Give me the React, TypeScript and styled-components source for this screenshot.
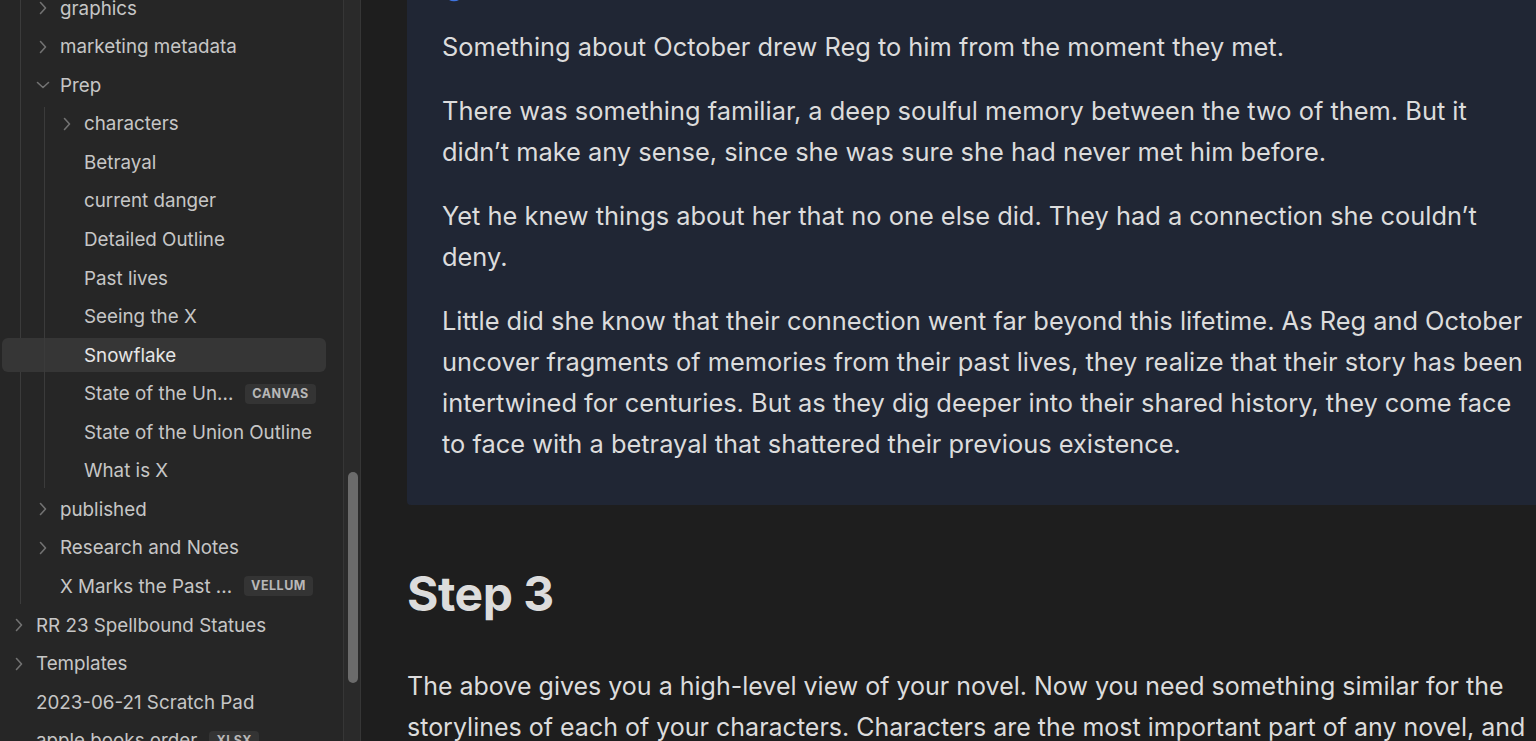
import React from 'react';
import styled, { createGlobalStyle } from 'styled-components';

const GlobalStyle = createGlobalStyle`
  html, body { margin: 0; padding: 0; background: #1e1e1e; overflow: hidden; }
  * { box-sizing: border-box; }
`;

const Shell = styled.div`
  display: flex;
  width: 1536px;
  height: 741px;
  overflow: hidden;
  font-family: Inter, "Noto Sans", sans-serif;
`;

const Sidebar = styled.aside`
  flex: none;
  width: 361px;
  display: flex;
  background: #262626;
  border-right: 1px solid #363636;
  overflow: hidden;
`;

const ListArea = styled.div`
  flex: 1;
  min-width: 0;
  padding: 0 17px 0 2px;
  margin-top: -9px;
`;

const ScrollTrack = styled.div`
  flex: none;
  width: 17px;
  background: #2a2a2a;
  border-left: 1px solid #363636;
  padding-left: 4px;
`;

const Thumb = styled.div<{ $top: number; $height: number }>`
  width: 10px;
  margin-top: ${(p) => p.$top}px;
  height: ${(p) => p.$height}px;
  border-radius: 5px;
  background: #6b6b6b;
`;

const Group = styled.div<{ $parentDepth: number }>`
  position: relative;
  &::before {
    content: '';
    position: absolute;
    left: ${(p) => 18 + p.$parentDepth * 24}px;
    top: 0;
    bottom: 0;
    width: 1px;
    background: #3b3b3b;
  }
`;

const Row = styled.div<{ $depth: number; $active?: boolean }>`
  display: flex;
  align-items: center;
  height: 34.5px;
  margin-bottom: 4.06px;
  padding-left: ${(p) => 8 + p.$depth * 24}px;
  padding-right: 12px;
  border-radius: 6px;
  background: ${(p) => (p.$active ? '#363636' : 'transparent')};
  color: ${(p) => (p.$active ? '#e6e6e6' : '#c6c6c6')};
  font-size: 18.8px;
  white-space: nowrap;
`;

const Chevron = styled.span`
  flex: none;
  width: 18px;
  margin-right: 8px;
  display: flex;
  align-items: center;
  justify-content: center;
  color: #727272;
`;

const Label = styled.span`
  flex: none;
`;

const Badge = styled.span`
  flex: none;
  margin-left: 12px;
  padding: 0 7px;
  height: 20px;
  line-height: 20px;
  border-radius: 4px;
  background: #343434;
  color: #b8b8b8;
  font-size: 12.5px;
  font-weight: 700;
  letter-spacing: 0.04em;
`;

const Main = styled.main`
  flex: 1;
  min-width: 0;
  background: #1e1e1e;
  overflow: hidden;
`;

const Content = styled.div`
  width: 1200px;
  margin-top: -42px;
  padding-left: 46px;
  color: #dcdcdc;
`;

const Callout = styled.div`
  background: #202634;
  border-radius: 4px;
  padding: 12px 35px 41px 35px;
`;

const CalloutTitle = styled.div`
  height: 41px;
  display: flex;
  align-items: center;
  margin-bottom: 15px;
  color: #3f74e0;
  padding-left: 1px;
`;

const Para = styled.p<{ $last?: boolean; $size: number }>`
  margin: 0 0 ${(p) => (p.$last ? 0 : 23)}px 0;
  font-size: ${(p) => p.$size}px;
  line-height: 41px;
  white-space: nowrap;
`;

const Heading = styled.h2`
  margin: 60px 0 43px 0;
  font-size: 48px;
  line-height: 1.2;
  font-weight: 700;
  letter-spacing: -0.01em;
  color: #dcdcdc;
`;

const ChevronRight = () => (
  <svg width="16" height="16" viewBox="0 0 16 16" fill="none">
    <path d="M5.5 2.5 L10.5 8 L5.5 13.5" stroke="currentColor" strokeWidth="1.6" strokeLinecap="round" strokeLinejoin="round" />
  </svg>
);

const ChevronDown = () => (
  <svg width="16" height="16" viewBox="0 0 16 16" fill="none">
    <path d="M2.5 5.5 L8 10.5 L13.5 5.5" stroke="currentColor" strokeWidth="1.6" strokeLinecap="round" strokeLinejoin="round" />
  </svg>
);

type Item = {
  name: string;
  folder?: boolean;
  open?: boolean;
  active?: boolean;
  badge?: string;
  children?: Item[];
};

const level1: Item[] = [
  { name: 'graphics', folder: true },
  { name: 'marketing metadata', folder: true },
  {
    name: 'Prep',
    folder: true,
    open: true,
    children: [
      { name: 'characters', folder: true },
      { name: 'Betrayal' },
      { name: 'current danger' },
      { name: 'Detailed Outline' },
      { name: 'Past lives' },
      { name: 'Seeing the X' },
      { name: 'Snowflake', active: true },
      { name: 'State of the Un...', badge: 'CANVAS' },
      { name: 'State of the Union Outline' },
      { name: 'What is X' },
    ],
  },
  { name: 'published', folder: true },
  { name: 'Research and Notes', folder: true },
  { name: 'X Marks the Past ...', badge: 'VELLUM' },
];

const level0: Item[] = [
  { name: 'RR 23 Spellbound Statues', folder: true },
  { name: 'Templates', folder: true },
  { name: '2023-06-21 Scratch Pad' },
  { name: 'apple books order', badge: 'XLSX' },
];

const TreeNode: React.FC<{ item: Item; depth: number }> = ({ item, depth }) => (
  <>
    <Row $depth={depth} $active={item.active}>
      <Chevron>{item.folder ? item.open ? <ChevronDown /> : <ChevronRight /> : null}</Chevron>
      <Label>{item.name}</Label>
      {item.badge && <Badge>{item.badge}</Badge>}
    </Row>
    {item.open && item.children && (
      <Group $parentDepth={depth}>
        {item.children.map((c) => (
          <TreeNode key={c.name} item={c} depth={depth + 1} />
        ))}
      </Group>
    )}
  </>
);

const InfoIcon = () => (
  <svg width="22" height="22" viewBox="0 0 24 24" fill="none" stroke="currentColor" strokeWidth="2.4" strokeLinecap="round">
    <circle cx="12" cy="12" r="10" />
    <path d="M12 16v-4M12 8h.01" />
  </svg>
);

const calloutParas: string[][] = [
  ['Something about October drew Reg to him from the moment they met.'],
  [
    'There was something familiar, a deep soulful memory between the two of them. But it',
    'didn’t make any sense, since she was sure she had never met him before.',
  ],
  [
    'Yet he knew things about her that no one else did. They had a connection she couldn’t',
    'deny.',
  ],
  [
    'Little did she know that their connection went far beyond this lifetime. As Reg and October',
    'uncover fragments of memories from their past lives, they realize that their story has been',
    'intertwined for centuries. But as they dig deeper into their shared history, they come face',
    'to face with a betrayal that shattered their previous existence.',
  ],
];

const bodyLines = [
  'The above gives you a high-level view of your novel. Now you need something similar for the',
  'storylines of each of your characters. Characters are the most important part of any novel, and',
];

const Lines: React.FC<{ lines: string[] }> = ({ lines }) => (
  <>
    {lines.map((l, i) => (
      <React.Fragment key={i}>
        {i > 0 && <br />}
        {l}
      </React.Fragment>
    ))}
  </>
);

export default function App() {
  return (
    <>
      <GlobalStyle />
      <Shell>
        <Sidebar>
          <ListArea>
            <Group $parentDepth={0}>
              {level1.map((it) => (
                <TreeNode key={it.name} item={it} depth={1} />
              ))}
            </Group>
            {level0.map((it) => (
              <TreeNode key={it.name} item={it} depth={0} />
            ))}
          </ListArea>
          <ScrollTrack>
            <Thumb $top={472} $height={211} />
          </ScrollTrack>
        </Sidebar>
        <Main>
          <Content>
            <Callout>
              <CalloutTitle>
                <InfoIcon />
              </CalloutTitle>
              {calloutParas.map((p, i) => (
                <Para key={i} $size={25.4} $last={i === calloutParas.length - 1}>
                  <Lines lines={p} />
                </Para>
              ))}
            </Callout>
            <Heading>Step 3</Heading>
            <Para $size={25}>
              <Lines lines={bodyLines} />
            </Para>
          </Content>
        </Main>
      </Shell>
    </>
  );
}
